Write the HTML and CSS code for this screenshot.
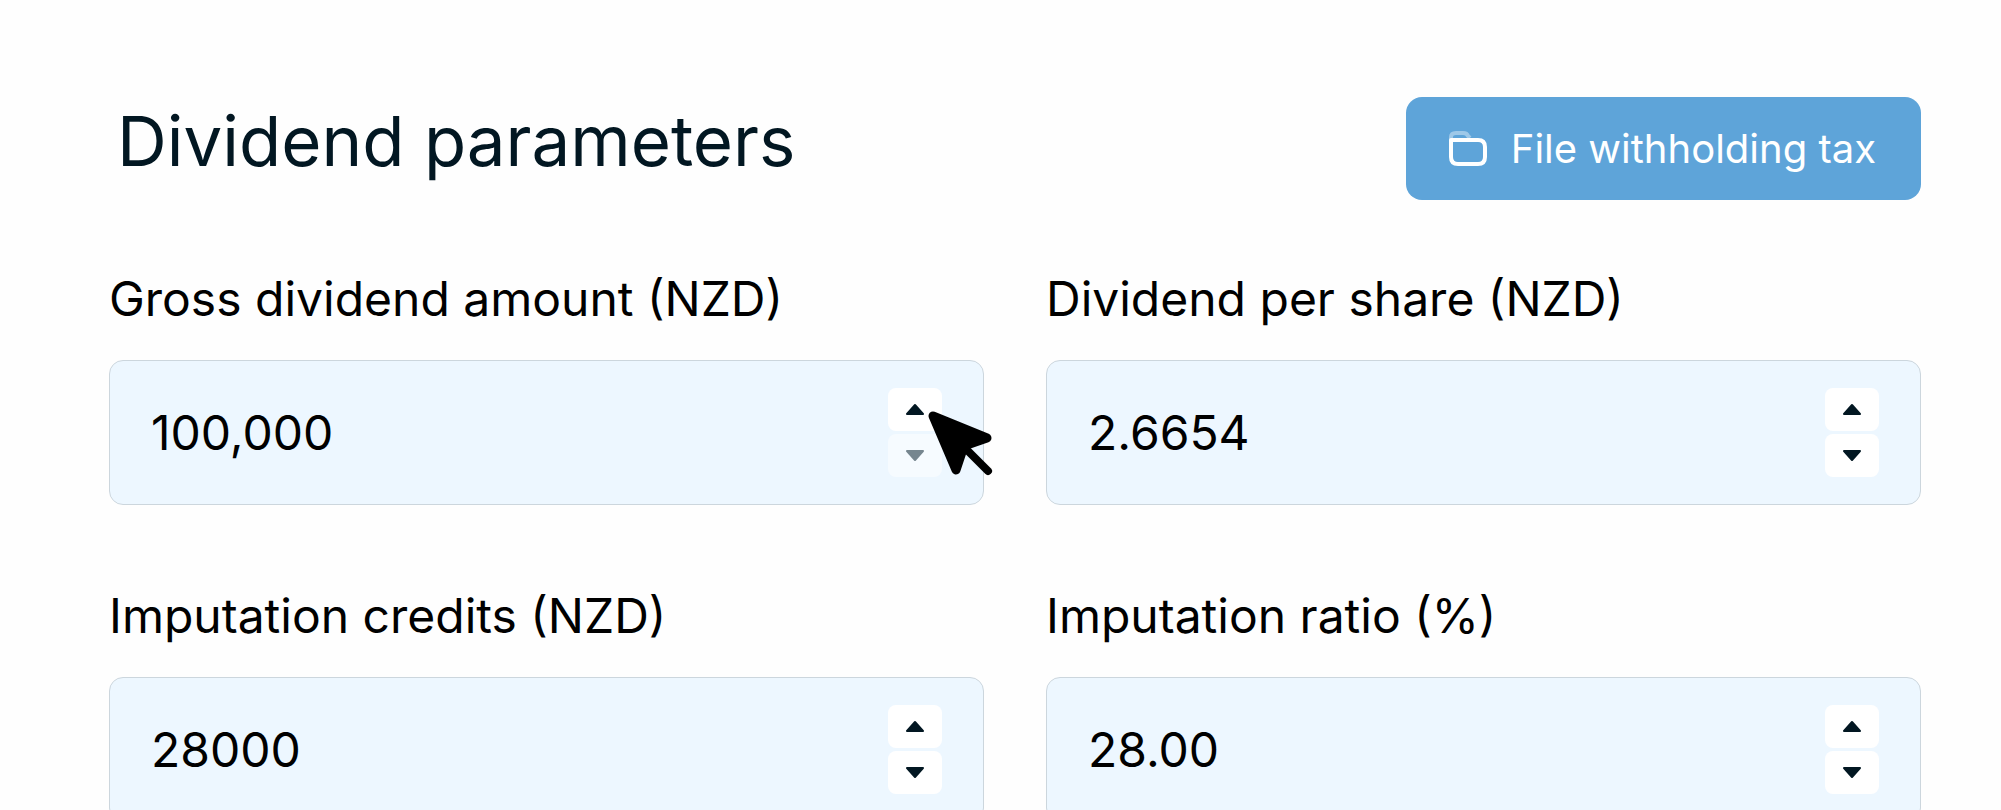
FILE: index.html
```
<!DOCTYPE html>
<html lang="en">
<head>
  <meta charset="UTF-8">
  <meta name="viewport" content="width=device-width, initial-scale=1.0">
  <title>Dividend parameters</title>
  <link rel="stylesheet" href="styles.css">
</head>
<body>

<main class="page">
  <header class="page-header">
    <h1>Dividend parameters</h1>
    <button type="button" class="file-button">
      <svg class="folder-icon" viewBox="0 0 40 40" fill="none" stroke="#fff" stroke-width="4" aria-hidden="true">
        <path opacity="0.4" d="M3 11V8Q3 4 8 4H15Q19 4 20 7L22 9"/>
        <path d="M3 11H30Q37 11 37 18V28Q37 35 30 35H10Q3 35 3 28Z" stroke-linejoin="round"/>
      </svg>
      File withholding tax
    </button>
  </header>

  <form class="params">
    <div class="field">
      <label for="grossAmount">Gross dividend amount (NZD)</label>
      <div class="field-box">
        <input type="text" inputmode="decimal" id="grossAmount" value="100,000">
        <div class="spinner">
          <button type="button" aria-label="Increase gross dividend amount"><svg viewBox="0 0 20 14"><path d="M10 2L18 11H2Z"/></svg></button>
          <button type="button" aria-label="Decrease gross dividend amount" disabled><svg viewBox="0 0 20 14"><path d="M10 11L2 2H18Z"/></svg></button>
        </div>
        <svg class="pointer" viewBox="0 0 64 64" aria-hidden="true">
          <path d="M5 4L59 26L36 34L28 58Z" fill="#000" stroke="#000" stroke-width="9" stroke-linejoin="round"/>
          <path d="M38 37L60 59" stroke="#000" stroke-width="8" stroke-linecap="round"/>
        </svg>
      </div>
    </div>

    <div class="field">
      <label for="perShare">Dividend per share (NZD)</label>
      <div class="field-box">
        <input type="text" inputmode="decimal" id="perShare" value="2.6654">
        <div class="spinner">
          <button type="button" aria-label="Increase dividend per share"><svg viewBox="0 0 20 14"><path d="M10 2L18 11H2Z"/></svg></button>
          <button type="button" aria-label="Decrease dividend per share"><svg viewBox="0 0 20 14"><path d="M10 11L2 2H18Z"/></svg></button>
        </div>
      </div>
    </div>

    <div class="field">
      <label for="credits">Imputation credits (NZD)</label>
      <div class="field-box">
        <input type="text" inputmode="decimal" id="credits" value="28000">
        <div class="spinner">
          <button type="button" aria-label="Increase imputation credits"><svg viewBox="0 0 20 14"><path d="M10 2L18 11H2Z"/></svg></button>
          <button type="button" aria-label="Decrease imputation credits"><svg viewBox="0 0 20 14"><path d="M10 11L2 2H18Z"/></svg></button>
        </div>
      </div>
    </div>

    <div class="field">
      <label for="ratio">Imputation ratio (%)</label>
      <div class="field-box">
        <input type="text" inputmode="decimal" id="ratio" value="28.00">
        <div class="spinner">
          <button type="button" aria-label="Increase imputation ratio"><svg viewBox="0 0 20 14"><path d="M10 2L18 11H2Z"/></svg></button>
          <button type="button" aria-label="Decrease imputation ratio"><svg viewBox="0 0 20 14"><path d="M10 11L2 2H18Z"/></svg></button>
        </div>
      </div>
    </div>
  </form>
</main>

</body>
</html>
```

FILE: styles.css
```
* {
  box-sizing: border-box;
}

body {
  margin: 0;
  height: 100vh;
  overflow: hidden;
  background: #fefefe;
  color: #000;
  font-family: Inter, "Liberation Sans", sans-serif;
}

button, input {
  font-family: inherit;
}

.page {
  padding: 97px 80px 80px 109px;
}

.page-header {
  display: flex;
  justify-content: space-between;
  align-items: flex-start;
  margin-bottom: 69px;
}

h1 {
  margin: 0;
  padding: 4px 8px;
  font-size: 69px;
  line-height: 80px;
  font-weight: 400;
  color: #021722;
}

.file-button {
  display: flex;
  align-items: center;
  gap: 23px;
  height: 103px;
  padding: 0 45px 0 42px;
  border: none;
  border-radius: 16px;
  background: #5ea4d9;
  color: #fff;
  font-size: 40px;
  cursor: pointer;
}

.folder-icon {
  width: 40px;
  height: 40px;
}

/* two column form */
.params {
  display: grid;
  grid-template-columns: repeat(2, minmax(0, 1fr));
  gap: 81px 62px;
}

.field {
  display: flex;
  flex-direction: column;
  gap: 31px;
}

label {
  font-size: 48px;
  line-height: 60px;
}

.field-box {
  position: relative;
  display: flex;
  align-items: center;
  height: 145px;
  padding: 0 41px;
  border: 1px solid #ccd6dd;
  border-radius: 14px;
  background: #edf7ff;
}

.field-box input {
  flex: 1;
  min-width: 0;
  padding: 0;
  border: none;
  outline: none;
  background: transparent;
  color: #000;
  font-size: 48px;
  line-height: 60px;
}

.spinner {
  display: flex;
  flex-direction: column;
  gap: 3px;
}

.spinner button {
  display: flex;
  align-items: center;
  justify-content: center;
  width: 54px;
  height: 43px;
  padding: 0;
  border: none;
  border-radius: 8px;
  background: #fff;
  cursor: pointer;
}

.spinner button:disabled {
  opacity: 0.5;
}

.spinner svg {
  width: 20px;
  height: 14px;
  fill: #021722;
  stroke: #021722;
  stroke-width: 2;
  stroke-linejoin: round;
}

/* mouse pointer resting on the first spinner */
.pointer {
  position: absolute;
  top: 51px;
  right: -9px;
  width: 64px;
  height: 64px;
  overflow: visible;
  pointer-events: none;
}

@media (max-width: 1100px) {
  .params {
    grid-template-columns: minmax(0, 1fr);
  }
}
```
